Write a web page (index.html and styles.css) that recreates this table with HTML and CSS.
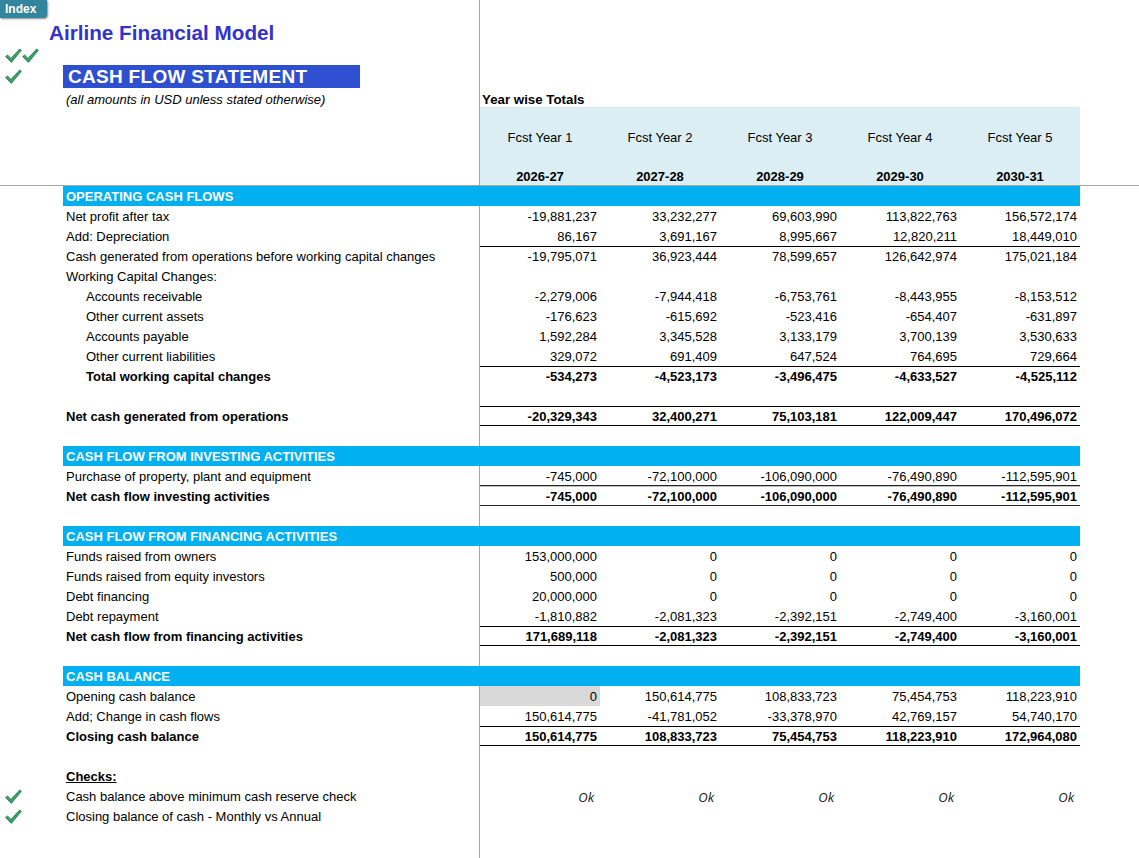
FILE: index.html
```html
<!DOCTYPE html>
<html lang="en">
<head>
<meta charset="utf-8">
<title>Airline Financial Model - Cash Flow Statement</title>
<link rel="stylesheet" href="styles.css">
</head>
<body>
<div class="sheet">
  <header class="top">
    <div class="top-left">
      <div class="index-btn">Index</div>
      <div class="title">Airline Financial Model</div>
      <div class="checks-row">
        <svg class="tick" viewBox="0 0 17 15" width="17" height="15"><path d="M0.6 8.6 L2.6 6.9 L5.9 10.4 L14.6 1 L16.4 2.3 L6.4 14.4 Z"/></svg>
        <svg class="tick" viewBox="0 0 17 15" width="17" height="15"><path d="M0.6 8.6 L2.6 6.9 L5.9 10.4 L14.6 1 L16.4 2.3 L6.4 14.4 Z"/></svg>
      </div>
      <div class="stmt-row">
        <div class="stmt-gut"><svg class="tick" viewBox="0 0 17 15" width="17" height="15"><path d="M0.6 8.6 L2.6 6.9 L5.9 10.4 L14.6 1 L16.4 2.3 L6.4 14.4 Z"/></svg></div>
        <div class="stmt">CASH FLOW STATEMENT</div>
      </div>
      <div class="subtitle">(all amounts in USD unless stated otherwise)</div>
    </div>
    <div class="top-right">
      <div class="ywt">Year wise Totals</div>
      <div class="panel">
        <div class="fy">Fcst Year 1</div>
        <div class="fy">Fcst Year 2</div>
        <div class="fy">Fcst Year 3</div>
        <div class="fy">Fcst Year 4</div>
        <div class="fy">Fcst Year 5</div>
        <div class="yr">2026-27</div>
        <div class="yr">2027-28</div>
        <div class="yr">2028-29</div>
        <div class="yr">2029-30</div>
        <div class="yr">2030-31</div>
      </div>
    </div>
  </header>

  <section class="rows">
    <div class="row band"><span class="gut"></span><span class="bandcell">OPERATING CASH FLOWS</span></div>
    <div class="row"><span class="gut"></span><span class="lab">Net profit after tax</span><span class="num">-19,881,237</span><span class="num">33,232,277</span><span class="num">69,603,990</span><span class="num">113,822,763</span><span class="num">156,572,174</span></div>
    <div class="row"><span class="gut"></span><span class="lab">Add: Depreciation</span><span class="num">86,167</span><span class="num">3,691,167</span><span class="num">8,995,667</span><span class="num">12,820,211</span><span class="num">18,449,010</span></div>
    <div class="row tline"><span class="gut"></span><span class="lab">Cash generated from operations before working capital changes</span><span class="num">-19,795,071</span><span class="num">36,923,444</span><span class="num">78,599,657</span><span class="num">126,642,974</span><span class="num">175,021,184</span></div>
    <div class="row"><span class="gut"></span><span class="lab">Working Capital Changes:</span></div>
    <div class="row"><span class="gut"></span><span class="lab ind">Accounts receivable</span><span class="num">-2,279,006</span><span class="num">-7,944,418</span><span class="num">-6,753,761</span><span class="num">-8,443,955</span><span class="num">-8,153,512</span></div>
    <div class="row"><span class="gut"></span><span class="lab ind">Other current assets</span><span class="num">-176,623</span><span class="num">-615,692</span><span class="num">-523,416</span><span class="num">-654,407</span><span class="num">-631,897</span></div>
    <div class="row"><span class="gut"></span><span class="lab ind">Accounts payable</span><span class="num">1,592,284</span><span class="num">3,345,528</span><span class="num">3,133,179</span><span class="num">3,700,139</span><span class="num">3,530,633</span></div>
    <div class="row"><span class="gut"></span><span class="lab ind">Other current liabilities</span><span class="num">329,072</span><span class="num">691,409</span><span class="num">647,524</span><span class="num">764,695</span><span class="num">729,664</span></div>
    <div class="row tline bold"><span class="gut"></span><span class="lab ind">Total working capital changes</span><span class="num">-534,273</span><span class="num">-4,523,173</span><span class="num">-3,496,475</span><span class="num">-4,633,527</span><span class="num">-4,525,112</span></div>
    <div class="row"><span class="gut"></span><span class="lab"></span></div>
    <div class="row tbline bold"><span class="gut"></span><span class="lab">Net cash generated from operations</span><span class="num">-20,329,343</span><span class="num">32,400,271</span><span class="num">75,103,181</span><span class="num">122,009,447</span><span class="num">170,496,072</span></div>
    <div class="row"><span class="gut"></span><span class="lab"></span></div>

    <div class="row band"><span class="gut"></span><span class="bandcell">CASH FLOW FROM INVESTING ACTIVITIES</span></div>
    <div class="row bline-dark"><span class="gut"></span><span class="lab">Purchase of property, plant and equipment</span><span class="num">-745,000</span><span class="num">-72,100,000</span><span class="num">-106,090,000</span><span class="num">-76,490,890</span><span class="num">-112,595,901</span></div>
    <div class="row dbl bold"><span class="gut"></span><span class="lab">Net cash flow investing activities</span><span class="num">-745,000</span><span class="num">-72,100,000</span><span class="num">-106,090,000</span><span class="num">-76,490,890</span><span class="num">-112,595,901</span></div>
    <div class="row"><span class="gut"></span><span class="lab"></span></div>

    <div class="row band"><span class="gut"></span><span class="bandcell">CASH FLOW FROM FINANCING ACTIVITIES</span></div>
    <div class="row"><span class="gut"></span><span class="lab">Funds raised from owners</span><span class="num">153,000,000</span><span class="num">0</span><span class="num">0</span><span class="num">0</span><span class="num">0</span></div>
    <div class="row"><span class="gut"></span><span class="lab">Funds raised from equity investors</span><span class="num">500,000</span><span class="num">0</span><span class="num">0</span><span class="num">0</span><span class="num">0</span></div>
    <div class="row"><span class="gut"></span><span class="lab">Debt financing</span><span class="num">20,000,000</span><span class="num">0</span><span class="num">0</span><span class="num">0</span><span class="num">0</span></div>
    <div class="row"><span class="gut"></span><span class="lab">Debt repayment</span><span class="num">-1,810,882</span><span class="num">-2,081,323</span><span class="num">-2,392,151</span><span class="num">-2,749,400</span><span class="num">-3,160,001</span></div>
    <div class="row tbline bold"><span class="gut"></span><span class="lab">Net cash flow from financing activities</span><span class="num">171,689,118</span><span class="num">-2,081,323</span><span class="num">-2,392,151</span><span class="num">-2,749,400</span><span class="num">-3,160,001</span></div>
    <div class="row"><span class="gut"></span><span class="lab"></span></div>

    <div class="row band"><span class="gut"></span><span class="bandcell">CASH BALANCE</span></div>
    <div class="row"><span class="gut"></span><span class="lab">Opening cash balance</span><span class="num input">0</span><span class="num">150,614,775</span><span class="num">108,833,723</span><span class="num">75,454,753</span><span class="num">118,223,910</span></div>
    <div class="row"><span class="gut"></span><span class="lab">Add; Change in cash flows</span><span class="num">150,614,775</span><span class="num">-41,781,052</span><span class="num">-33,378,970</span><span class="num">42,769,157</span><span class="num">54,740,170</span></div>
    <div class="row tbline bold"><span class="gut"></span><span class="lab">Closing cash balance</span><span class="num">150,614,775</span><span class="num">108,833,723</span><span class="num">75,454,753</span><span class="num">118,223,910</span><span class="num">172,964,080</span></div>
    <div class="row"><span class="gut"></span><span class="lab"></span></div>

    <div class="row"><span class="gut"></span><span class="lab"><span class="checks-title">Checks:</span></span></div>
    <div class="row"><span class="gut"><svg class="tick" viewBox="0 0 17 15" width="17" height="15"><path d="M0.6 8.6 L2.6 6.9 L5.9 10.4 L14.6 1 L16.4 2.3 L6.4 14.4 Z"/></svg></span><span class="lab">Cash balance above minimum cash reserve check</span><span class="num ok">Ok</span><span class="num ok">Ok</span><span class="num ok">Ok</span><span class="num ok">Ok</span><span class="num ok">Ok</span></div>
    <div class="row"><span class="gut"><svg class="tick" viewBox="0 0 17 15" width="17" height="15"><path d="M0.6 8.6 L2.6 6.9 L5.9 10.4 L14.6 1 L16.4 2.3 L6.4 14.4 Z"/></svg></span><span class="lab">Closing balance of cash - Monthly vs Annual</span></div>
    <div class="row tail"><span class="gut"></span><span class="lab"></span></div>
  </section>
</div>
</body>
</html>
```
FILE: styles.css
```css
* { box-sizing: border-box; }
html, body { margin: 0; padding: 0; }
body {
  width: 1139px;
  height: 858px;
  overflow: hidden;
  background: #fff;
  color: #000;
  font-family: "Liberation Sans", Arial, sans-serif;
  font-size: 13px;
}

/* frozen header area */
.top {
  display: grid;
  grid-template-columns: 480px 1fr;
  height: 186px;
  border-bottom: 1px solid #a6a6a6;
}
.top-left { border-right: 1px solid #a6a6a6; }

.index-btn {
  width: 47px;
  height: 18px;
  background: #31859c;
  color: #fff;
  font-weight: bold;
  font-size: 12px;
  line-height: 18px;
  padding-left: 5px;
  border-bottom-right-radius: 4px;
  box-shadow: 1px 1px 2px rgba(0, 0, 0, 0.45);
}
.title {
  margin: 3px 0 0 49px;
  height: 24px;
  line-height: 24px;
  font-size: 20.7px;
  font-weight: bold;
  color: #3333cc;
}
.checks-row {
  height: 20px;
  display: flex;
  align-items: center;
  padding-left: 5px;
}
.stmt-row {
  height: 23px;
  display: flex;
  align-items: center;
}
.stmt-gut {
  width: 63px;
  padding-left: 5px;
  display: flex;
  align-items: center;
}
.stmt {
  width: 297px;
  height: 23px;
  background: #2e4fcf;
  color: #fff;
  font-weight: bold;
  font-size: 19px;
  letter-spacing: 0.3px;
  line-height: 24px;
  padding-left: 5px;
}
.subtitle {
  margin: 4px 0 0 66px;
  line-height: 16px;
  font-style: italic;
}

.tick { display: block; }
.tick path { fill: #38a265; stroke: #1d6b42; stroke-width: 0.7; stroke-linejoin: round; }

.top-right { padding-top: 92px; }
.ywt {
  font-weight: bold;
  font-size: 13.3px;
  line-height: 15px;
  padding-left: 2px;
}
.panel {
  width: 600px;
  height: 78px;
  background: #daeef3;
  display: grid;
  grid-template-columns: repeat(5, 120px);
  grid-template-rows: 60px 18px;
  text-align: center;
}
.panel .fy { line-height: 60px; padding-top: 1px; }
.panel .yr { line-height: 18px; padding-top: 1px; font-weight: bold; }

/* statement rows */
.row {
  display: grid;
  grid-template-columns: 63px 417px repeat(5, 120px) 1fr;
  grid-template-rows: 20px;
  height: 20px;
}
.gut {
  display: flex;
  align-items: center;
  padding-left: 5px;
}
.lab {
  border-right: 1px solid #a6a6a6;
  padding-left: 3px;
  padding-top: 1px;
  line-height: 20px;
  white-space: nowrap;
}
.lab.ind { padding-left: 23px; }
.num {
  text-align: right;
  padding-right: 3px;
  padding-top: 1px;
  line-height: 20px;
  white-space: nowrap;
}
.num.input { background: #d9d9d9; }
.num.ok {
  font-family: "Open Sans", "Noto Sans", sans-serif;
  font-style: italic;
  padding-right: 6px;
  color: #1a1a1a;
}

.band .bandcell {
  grid-column: 2 / 8;
  background: #00b0f0;
  color: #fff;
  font-weight: bold;
  padding-left: 3px;
  padding-top: 1px;
  line-height: 20px;
}

.bold .lab, .bold .num { font-weight: bold; }

.tline .num { border-top: 1px solid #000; padding-top: 0; }
.tbline .num { border-top: 1px solid #000; border-bottom: 1px solid #000; padding-top: 0; line-height: 19px; }
.bline-dark .num { border-bottom: 1px solid #262626; line-height: 19px; }
.dbl .num { border-top: 1px solid #c0c0c0; border-bottom: 1px solid #262626; padding-top: 0; line-height: 19px; }

.checks-title { font-weight: bold; text-decoration: underline; }

.row.tail { height: 32px; grid-template-rows: 32px; }
```
